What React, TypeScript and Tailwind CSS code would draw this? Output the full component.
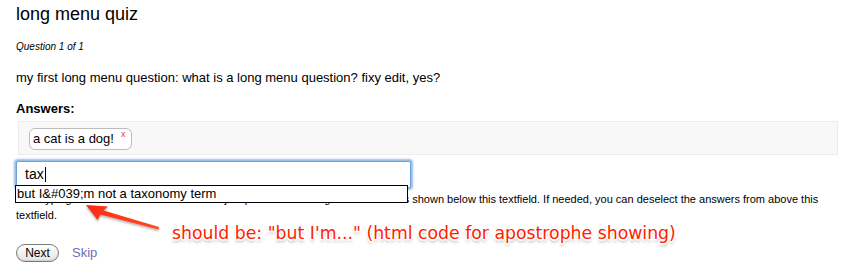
export default function App() {
  return (
    <div className="relative h-[278px] w-[841px] overflow-hidden bg-white pl-4 pt-[3px] font-['Liberation_Sans',Arial,sans-serif] text-black">
      <h1 className="text-[18px] leading-[22px]">long menu quiz</h1>
      <p className="mt-[16px] text-[10px] italic leading-[12px]">Question 1 of 1</p>
      <p className="mt-[17px] text-[13px] leading-[16px]">
        my first long menu question: what is a long menu question? fixy edit, yes?
      </p>
      <p className="mt-[15px] text-[13px] font-bold leading-[16px]">Answers:</p>

      <div className="mt-[4px] ml-[2px] mr-[3px] border border-[#ececec] bg-[#f8f8f8] px-[10px] py-[4px]">
        <span className="inline-flex h-[22px] items-center rounded-[6px] border border-[#bdbdbd] bg-white pl-[3px] pr-[6px] text-[13px]">
          a cat is a dog!
          <span className="ml-[7px] -translate-y-[4px] text-[9px] text-[#e53b3b]">x</span>
        </span>
      </div>

      <div className="relative mt-[6px]">
        <div className="flex h-[27px] w-[395px] items-center rounded-[2px] border border-[#6ea2d8] bg-white pl-[8px] text-[14px] shadow-[0_0_2px_2px_#94bde8]">
          tax<span className="ml-[1px] h-[15px] w-px bg-black" />
        </div>
        <div className="absolute left-[-1px] top-[24px] z-10 h-[18px] w-[393px] border border-black bg-white pl-[1px] text-[13px] leading-[16px]">
          but I&amp;#039;m not a taxonomy term
        </div>
        <p className="mt-[3px] w-[822px] text-[11px] leading-[16px]">
          Start typing in the textfield above and then just pick the matching answer choices shown below this textfield. If needed, you can deselect the answers from above this textfield.
        </p>
      </div>

      <div className="mt-[20px] flex items-center gap-[13px]">
        <button className="h-[18px] w-[43px] rounded-full border border-[#7a7a7a] bg-[linear-gradient(#ffffff,#e4e4e4)] text-[12px] leading-[16px] shadow-[inset_0_-1px_1px_#d0d0d0]">
          Next
        </button>
        <a className="text-[13px] text-[#6f6fb0]">Skip</a>
      </div>

      <svg className="absolute left-0 top-0 z-20" width="841" height="278" viewBox="0 0 841 278">
        <defs>
          <linearGradient id="ar" x1="0" y1="0" x2="1" y2="0">
            <stop offset="0" stopColor="#ff2a12" />
            <stop offset="1" stopColor="#ff4a20" />
          </linearGradient>
          <filter id="sh" x="-20%" y="-50%" width="140%" height="200%">
            <feDropShadow dx="0" dy="1.5" stdDeviation="1.2" floodColor="#000" floodOpacity="0.35" />
          </filter>
        </defs>
        <path
          d="M86 205 L108 206.5 L103.5 210.5 L159 227 L158.5 229.5 L100.5 214.5 L97.5 220 Z"
          fill="url(#ar)"
          filter="url(#sh)"
        />
      </svg>

      <div className="absolute left-[172px] top-[222px] z-20 whitespace-nowrap font-['DejaVu_Sans',sans-serif] text-[17.3px] leading-[22px] text-[#ff2200] [text-shadow:-1.5px_0_0_#fff,1.5px_0_0_#fff,0_-1.5px_0_#fff,0_1.5px_0_#fff,-1px_-1px_0_#fff,1px_1px_0_#fff,-1px_1px_0_#fff,1px_-1px_0_#fff,0_3px_3px_rgba(0,0,0,0.35)]">
        should be: "but I'm..." (html code for apostrophe showing)
      </div>
    </div>
  );
}
